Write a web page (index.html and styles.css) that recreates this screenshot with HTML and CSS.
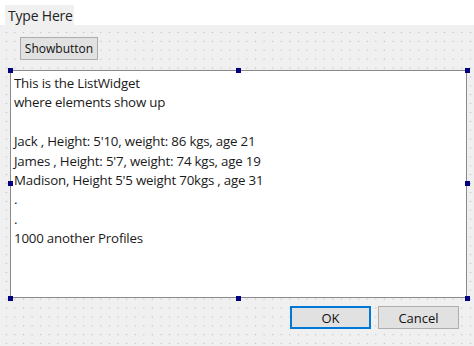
FILE: index.html
```html
<!DOCTYPE html>
<html lang="en">
<head>
    <meta charset="UTF-8" />
    <title>Form</title>
    <link rel="stylesheet" href="styles.css">
</head>
<body>

    <!-- menu bar -->
    <div class="menubar">
        <span class="menu-item">Type Here</span>
    </div>

    <!-- form canvas -->
    <div class="form">
        <div class="top-row">
            <button class="btn">Showbutton</button>
        </div>

        <div class="list-box">
            <div class="list">
                <div>This is the ListWidget</div>
                <div>where elements show up</div>
                <div>&nbsp;</div>
                <div>Jack , Height: 5'10, weight: 86 kgs, age 21</div>
                <div>James , Height: 5'7, weight: 74 kgs, age 19</div>
                <div>Madison, Height 5'5 weight 70kgs , age 31</div>
                <div>.</div>
                <div>.</div>
                <div>1000 another Profiles</div>
            </div>
            <!-- selection handles -->
            <span class="handle tl"></span>
            <span class="handle tc"></span>
            <span class="handle tr"></span>
            <span class="handle ml"></span>
            <span class="handle mr"></span>
            <span class="handle bl"></span>
            <span class="handle bc"></span>
            <span class="handle br"></span>
        </div>

        <div class="bottom-row">
            <button class="btn dlg default">OK</button>
            <button class="btn dlg">Cancel</button>
        </div>
    </div>

</body>
</html>
```

FILE: styles.css
```css
* {
    margin: 0;
    padding: 0;
    box-sizing: border-box;
}

body {
    font-family: 'Open Sans', 'Noto Sans', sans-serif;
    background: #fff;
    color: #1a1a1a;
    width: 474px;
    height: 346px;
    overflow: hidden;
}

.menubar {
    height: 25px;
    padding: 4px 0 0 5px;
}

.menu-item {
    display: inline-block;
    white-space: nowrap;
    height: 21px;
    width: 69px;
    background: #f0f0f0;
    font-size: 14px;
    line-height: 21px;
    padding-left: 3px;
    letter-spacing: -0.2px;
    color: #222;
}

.form {
    height: 321px;
    background-color: #f0f0f0;
    background-image: radial-gradient(circle, #bdbdbd 0.7px, transparent 1px);
    background-size: 8.6px 8.9px;
    background-position: 2px 3px;
    padding: 11px 0 0 10px;
}

.top-row {
    padding-left: 10px;
    height: 34px;
}

.btn {
    font-family: 'Open Sans', 'Noto Sans', sans-serif;
    font-size: 12px;
    color: #111;
    background: #e1e1e1;
    border: 1px solid #adadad;
    height: 23px;
    width: 78px;
}

.list-box {
    position: relative;
    width: 457px;
    height: 228px;
}

.list {
    height: 100%;
    background: #fff;
    border: 1px solid #8a8a8a;
    padding: 3px 0 0 3px;
    font-size: 13.3px;
    line-height: 19.4px;
    letter-spacing: -0.2px;
    color: #1a1a1a;
}

.handle {
    position: absolute;
    width: 5px;
    height: 5px;
    background: #000080;
}

.tl { left: -2px; top: -2px; }
.tc { left: 226px; top: -2px; }
.tr { right: -3px; top: -2px; }
.ml { left: -2px; top: 111px; }
.mr { right: -3px; top: 111px; }
.bl { left: -2px; bottom: -3px; }
.bc { left: 226px; bottom: -3px; }
.br { right: -3px; bottom: -3px; }

.bottom-row {
    display: flex;
    justify-content: flex-end;
    gap: 7px;
    width: 449px;
    padding-top: 8px;
}

.dlg {
    width: 81px;
    height: 23px;
    font-size: 13px;
}

.dlg.default {
    border: 2px solid #0078d7;
}
```
